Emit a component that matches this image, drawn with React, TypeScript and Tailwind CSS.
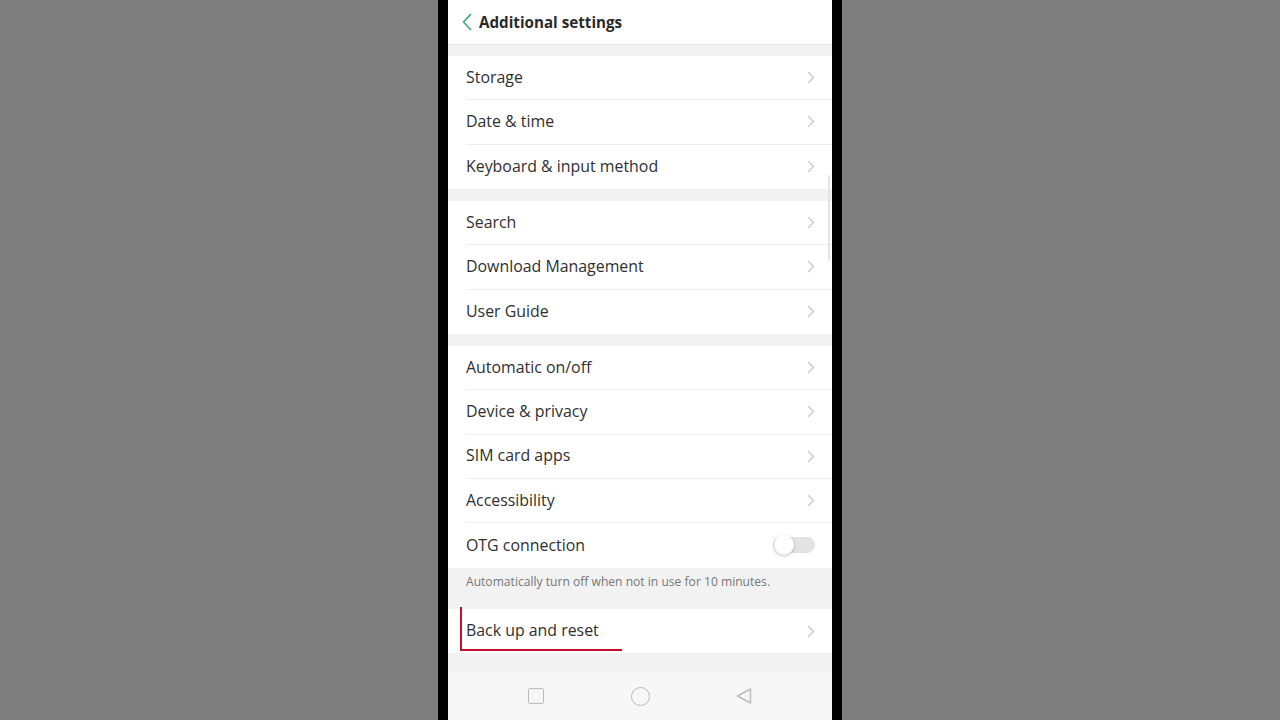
import { ReactNode } from "react";

const groups: string[][] = [
  ["Storage", "Date & time", "Keyboard & input method"],
  ["Search", "Download Management", "User Guide"],
  ["Automatic on/off", "Device & privacy", "SIM card apps", "Accessibility"],
];

function Chevron() {
  return (
    <svg width="8" height="13" viewBox="0 0 8 13" fill="none" className="shrink-0">
      <path d="M1.5 1.5 L6.5 6.5 L1.5 11.5" stroke="#c9c9c9" strokeWidth="1.3" strokeLinecap="round" strokeLinejoin="round" />
    </svg>
  );
}

function Row({ label, last, right }: { label: string; last?: boolean; right?: ReactNode }) {
  return (
    <div className="pl-[18px] bg-white">
      <div className={`h-[44.33px] flex items-center justify-between pr-[17px] ${last ? "" : "border-b border-[#efefef]"}`}>
        <span className="text-[15.9px] text-[#2f2f2f]">{label}</span>
        {right ?? <Chevron />}
      </div>
    </div>
  );
}

export default function App() {
  return (
    <div className="w-full h-[720px] bg-[#7f7f7f] flex justify-center overflow-hidden" style={{ fontFamily: "'Open Sans', 'Noto Sans', sans-serif" }}>
      <div className="w-[404px] h-full border-x-[10px] border-black bg-[#f2f2f2] flex flex-col relative">
        {/* header */}
        <div className="h-[45px] bg-white border-b border-[#e6e6e6] flex items-center pl-[13px] gap-[6px] shrink-0">
          <svg width="12" height="18" viewBox="0 0 12 18" fill="none">
            <path d="M9.5 1.5 L2.5 9 L9.5 16.5" stroke="#3fae7f" strokeWidth="1.8" strokeLinecap="round" strokeLinejoin="round" />
          </svg>
          <span className="text-[15.2px] font-bold text-[#2a2a2a]">Additional settings</span>
        </div>

        <div className="flex flex-col pt-[11px] gap-[12px]">
          {groups.slice(0, 2).map((g, i) => (
            <div key={i}>
              {g.map((l, j) => (
                <Row key={l} label={l} last={j === g.length - 1} />
              ))}
            </div>
          ))}
          <div>
            {groups[2].map((l) => (
              <Row key={l} label={l} />
            ))}
            <Row
              label="OTG connection"
              last
              right={
                <div className="w-[42px] h-[16px] rounded-full bg-[#e3e3e3] relative">
                  <div className="absolute left-[1px] top-[-2px] w-[20px] h-[20px] rounded-full bg-white shadow-[0_1px_3px_rgba(0,0,0,0.25)]" />
                </div>
              }
            />
            <div className="h-[41.5px] pl-[18px] pt-[5px] leading-[18px] text-[12.1px] text-[#777777]">
              Automatically turn off when not in use for 10 minutes.
            </div>
            <div className="relative">
              <Row label="Back up and reset" last />
              {/* red annotation */}
              <div className="absolute left-[12px] top-[-2px] w-[2px] h-[43px] bg-[#c8102e]" />
              <div className="absolute left-[12px] top-[40px] w-[162px] h-[2px] bg-[#c8102e]" />
            </div>
          </div>
        </div>

        <div className="flex-1" />
        {/* nav bar */}
        <div className="h-[48px] bg-[#f7f7f7] flex items-center justify-center shrink-0">
          <div className="w-[104px] flex justify-center">
            <div className="w-[16px] h-[16px] border-[1.5px] border-[#bdbdbd] rounded-[2px]" />
          </div>
          <div className="w-[104px] flex justify-center">
            <div className="w-[19px] h-[19px] border-[1.5px] border-[#bdbdbd] rounded-full" />
          </div>
          <div className="w-[104px] flex justify-center">
            <svg width="18" height="18" viewBox="0 0 18 18" fill="none">
              <path d="M15.5 2 L15.5 16 L2.5 9 Z" stroke="#bdbdbd" strokeWidth="1.5" strokeLinejoin="round" />
            </svg>
          </div>
        </div>

        {/* scrollbar */}
        <div className="absolute right-[2px] top-[175px] w-[2px] h-[86px] bg-[#e4e4e4] rounded-full" />
      </div>
    </div>
  );
}
